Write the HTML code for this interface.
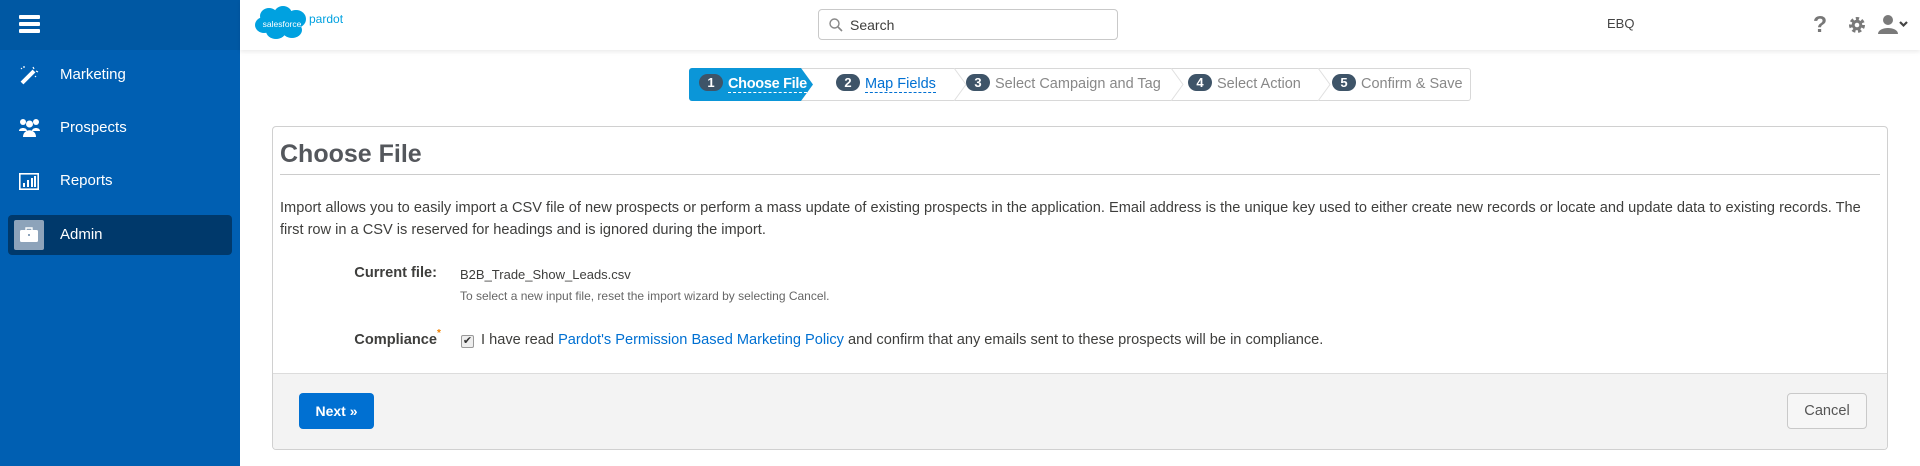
<!DOCTYPE html>
<html><head><meta charset="utf-8"><style>
*{box-sizing:border-box;margin:0;padding:0}
body{width:1920px;height:466px;overflow:hidden;background:#fff;font-family:"Liberation Sans",sans-serif;position:relative;color:#3e3e3c}
.sb{position:absolute;left:0;top:0;width:240px;height:466px;background:#005fb2}
.sbh{position:absolute;left:0;top:0;width:240px;height:50px;background:#0058a3}
.ham{position:absolute;left:19px;top:15px;width:21px;height:4px;background:#fff;box-shadow:0 7px 0 #fff,0 14px 0 #fff;border-radius:1px}
.it{position:absolute;left:60px;color:#fff;font-size:15px}
.ic{position:absolute;left:19px}
.adm{position:absolute;left:8px;top:215px;width:224px;height:40px;background:#00396b;border-radius:4px}
.hdr{position:absolute;left:240px;top:0;right:0;height:50px;background:#fff;box-shadow:0 2px 4px rgba(0,0,0,.08)}
.search{position:absolute;left:818px;top:9px;width:300px;height:31px;border:1px solid #c9c9c9;border-radius:4px;font-size:14px;color:#3e3e3c;padding:7px 0 0 31px}
.step{position:absolute;top:68px;height:33px;font-size:14.5px;line-height:33px;white-space:nowrap}
.badge{display:inline-block;background:#3e5468;color:#fff;font-weight:bold;font-size:13px;border-radius:9px;width:24px;height:17px;line-height:17px;text-align:center;vertical-align:1px;margin-right:5px}
.card{position:absolute;left:272px;top:126px;width:1616px;height:324px;border:1px solid #d0d0d0;border-radius:4px;overflow:hidden}
.foot{position:absolute;left:0;right:0;bottom:0;height:76px;background:#f3f3f3;border-top:1px solid #dcdcdc}
</style></head><body>
<div class="sb"><div class="sbh"><div class="ham"></div></div>
<svg class="ic" style="top:65px" width="20" height="20" viewBox="0 0 20 20"><path d="M3 18 L15 6" stroke="#fff" stroke-width="4"/><path d="M2 3l1 1M5 1v2M14 2l1 2M17 6l2 1M16 11l1 1" stroke="#fff" stroke-width="1.2"/></svg>
<div class="it" style="top:66px">Marketing</div>
<svg class="ic" style="top:118px" width="21" height="19" viewBox="0 0 21 19"><circle cx="4" cy="4" r="3" fill="#fff"/><circle cx="17" cy="4" r="3" fill="#fff"/><circle cx="10.5" cy="6" r="3.5" fill="#fff"/><path d="M0 13c0-4 8-4 8 0zM13 13c0-4 8-4 8 0z" fill="#fff"/><path d="M4 19c0-9 13-9 13 0z" fill="#fff"/></svg>
<div class="it" style="top:119px">Prospects</div>
<svg class="ic" style="top:173px" width="20" height="17" viewBox="0 0 20 17"><rect x="0.8" y="0.8" width="18.4" height="15.4" fill="none" stroke="#fff" stroke-width="1.6"/><rect x="4" y="10" width="2" height="4" fill="#fff"/><rect x="8" y="7" width="2" height="7" fill="#fff"/><rect x="12" y="5" width="2" height="9" fill="#fff"/><rect x="15" y="3" width="2" height="11" fill="#fff"/></svg>
<div class="it" style="top:172px">Reports</div>
<div class="adm"><div style="position:absolute;left:6px;top:5px;width:30px;height:30px;background:#8da3ba;border-radius:2px"></div>
<svg style="position:absolute;left:12px;top:12px" width="18" height="15" viewBox="0 0 18 15"><path d="M6 3V1h6v2" fill="none" stroke="#fff" stroke-width="1.4"/><rect x="0" y="3" width="18" height="12" rx="1.5" fill="#fff"/><rect x="8" y="7" width="2" height="2" fill="#8da3ba"/></svg>
<div style="position:absolute;left:52px;top:11px;color:#fff;font-size:15px">Admin</div></div>
</div>
<div class="hdr">
<svg style="position:absolute;left:14px;top:4px" width="120" height="38" viewBox="0 0 120 38"><g fill="#00a1e0"><ellipse cx="15" cy="12" rx="9" ry="8"/><ellipse cx="29" cy="10" rx="9" ry="8"/><ellipse cx="42" cy="15" rx="10" ry="9"/><ellipse cx="10" cy="21" rx="9" ry="8"/><ellipse cx="22" cy="27" rx="10" ry="8"/><ellipse cx="38" cy="26" rx="10" ry="8"/><rect x="8" y="12" width="38" height="16"/></g><text x="28" y="23" font-size="8.5" fill="#fff" text-anchor="middle" font-family="Liberation Sans">salesforce</text><text x="55" y="19" font-size="12" fill="#00a1e0" font-family="Liberation Sans">pardot</text></svg>
</div>
<div class="search"><svg style="position:absolute;left:10px;top:8px" width="14" height="14" viewBox="0 0 14 14"><circle cx="5.5" cy="5.5" r="4.5" fill="none" stroke="#888" stroke-width="1.4"/><path d="M9 9l4 4" stroke="#888" stroke-width="1.6"/></svg>Search</div>
<div style="position:absolute;left:1607px;top:16px;font-size:13px;color:#444">EBQ</div>
<div style="position:absolute;left:1813px;top:11px;font-size:23px;font-weight:bold;color:#777">?</div>
<svg style="position:absolute;left:1848px;top:16px" width="18" height="18" viewBox="0 0 18 18"><circle cx="9" cy="9" r="6" fill="none" stroke="#7a7a7a" stroke-width="4" stroke-dasharray="3 2.4"/><circle cx="9" cy="9" r="5.3" fill="#7a7a7a"/><circle cx="9" cy="9" r="2.3" fill="#fff"/></svg>
<svg style="position:absolute;left:1878px;top:14px" width="32" height="20" viewBox="0 0 32 20"><circle cx="10" cy="6" r="5" fill="#7a7a7a"/><path d="M0 20c0-8 20-8 20 0z" fill="#7a7a7a"/><path d="M22 8l3.5 3.5L29 8" fill="none" stroke="#444" stroke-width="2.2"/></svg>

<div style="position:absolute;left:689px;top:68px;width:782px;height:33px;border:1px solid #d8d8d8;border-radius:3px"></div>
<svg style="position:absolute;left:689px;top:68px" width="782" height="33"><path d="M0 3a3 3 0 0 1 3-3H112L124 16.5 112 33H3a3 3 0 0 1-3-3z" fill="#0b96d8"/><path d="M265 0l12 16.5L265 33M482 0l12 16.5L482 33M629 0l12 16.5L629 33" fill="none" stroke="#e0e0e0"/></svg>
<div class="step" style="left:699px;color:#fff;font-weight:bold;letter-spacing:-0.3px"><span class="badge" style="background:#3e5468;letter-spacing:0">1</span><span style="border-bottom:1px dashed #fff">Choose File</span></div>
<div class="step" style="left:836px;color:#0070d2"><span class="badge">2</span><span style="border-bottom:1px dashed #0070d2;line-height:18px">Map Fields</span></div>
<div class="step" style="left:966px;color:#888"><span class="badge">3</span>Select Campaign and Tag</div>
<div class="step" style="left:1188px;color:#888"><span class="badge">4</span>Select Action</div>
<div class="step" style="left:1332px;color:#888"><span class="badge">5</span>Confirm &amp; Save</div>

<div class="card">
<div style="position:absolute;left:7px;top:13px;font-size:25px;font-weight:bold;color:#54575c">Choose File</div>
<div style="position:absolute;left:7px;right:7px;top:47px;border-top:1px solid #ccc"></div>
<div style="position:absolute;left:7px;right:14px;top:70px;font-size:14.6px;line-height:22px;color:#3e3e3c">Import allows you to easily import a CSV file of new prospects or perform a mass update of existing prospects in the application. Email address is the unique key used to either create new records or locate and update data to existing records. The first row in a CSV is reserved for headings and is ignored during the import.</div>
<div style="position:absolute;right:1450px;top:138px;font-size:14.6px;font-weight:bold;white-space:nowrap">Current file:</div>
<div style="position:absolute;left:187px;top:140px;font-size:13px">B2B_Trade_Show_Leads.csv</div>
<div style="position:absolute;left:187px;top:162px;font-size:12px;color:#666">To select a new input file, reset the import wizard by selecting Cancel.</div>
<div style="position:absolute;right:1450px;top:205px;font-size:14.6px;font-weight:bold;white-space:nowrap">Compliance<sup style="color:#f38303;font-size:10px;position:absolute;top:-4px">*</sup></div>
<div style="position:absolute;left:188px;top:208px;width:13px;height:13px;border:1px solid #999;border-radius:2px;background:#eee;font-size:11px;line-height:11px;text-align:center;color:#333">✔</div>
<div style="position:absolute;left:208px;top:205px;font-size:14.6px;white-space:nowrap">I have read <span style="color:#0070d2">Pardot's Permission Based Marketing Policy</span> and confirm that any emails sent to these prospects will be in compliance.</div>
<div class="foot">
<div style="position:absolute;left:26px;top:19px;width:75px;height:36px;background:#0070d2;border-radius:4px;color:#fff;font-size:14px;line-height:36px;text-align:center;font-weight:bold">Next »</div>
<div style="position:absolute;right:20px;top:19px;width:80px;height:36px;border:1px solid #c9c9c9;background:#f6f6f6;border-radius:4px;font-size:14.6px;line-height:34px;text-align:center;color:#555">Cancel</div>
</div></div>
</body></html>
